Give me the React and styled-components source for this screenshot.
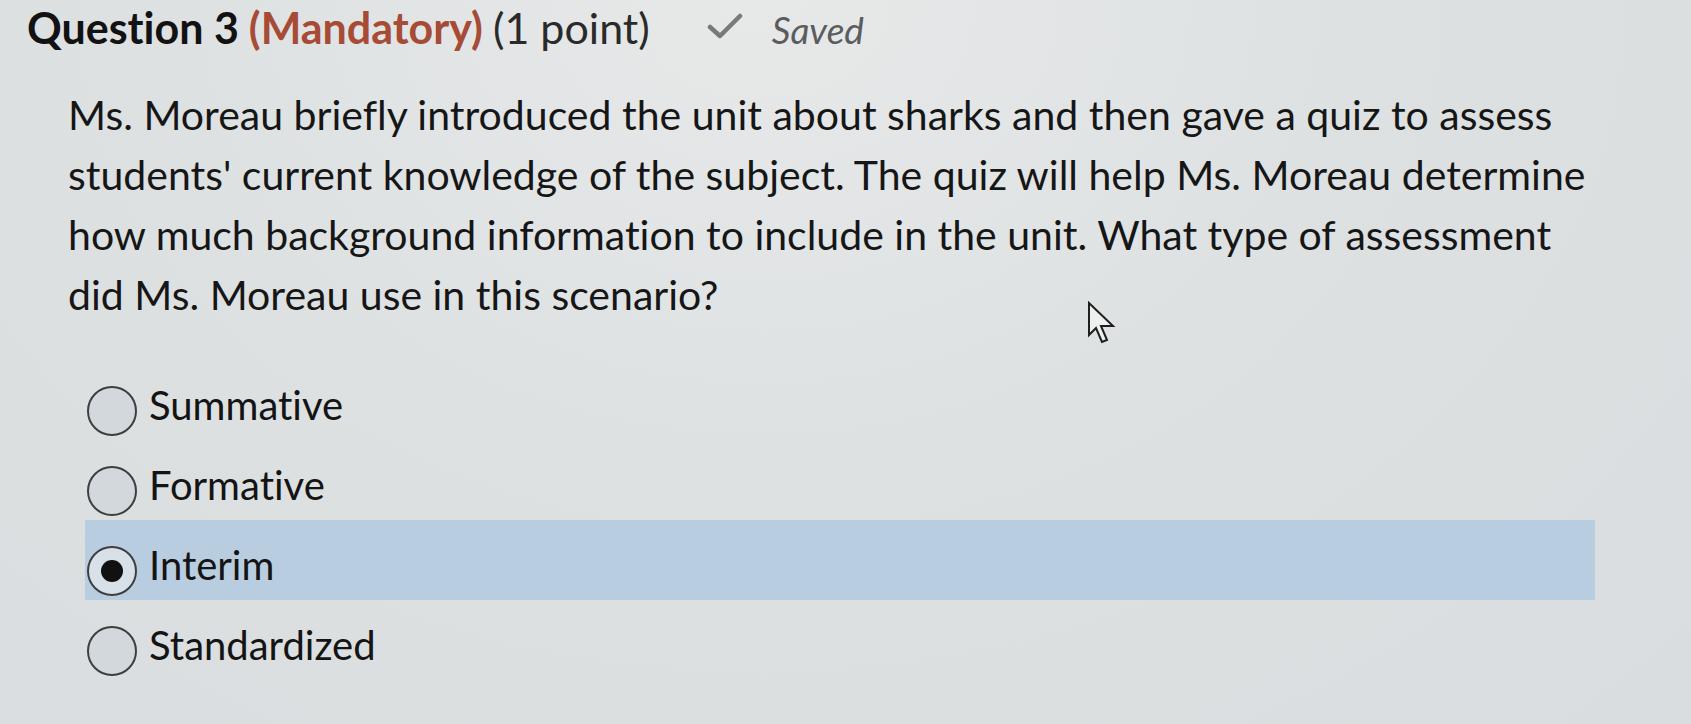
import React from "react";
import styled, { createGlobalStyle } from "styled-components";

const Global = createGlobalStyle`
  html, body { margin: 0; padding: 0; }
  body {
    width: 1691px;
    height: 724px;
    overflow: hidden;
    font-family: Lato, "Open Sans", "Liberation Sans", sans-serif;
    font-variant-ligatures: no-common-ligatures;
    background: #dde1e2;
  }
`;

const Page = styled.div`
  position: relative;
  width: 1691px;
  height: 724px;
  box-sizing: border-box;
  padding: 3px 0 0 27px;
  background: radial-gradient(ellipse at 45% 0%, #e7e9e9 0%, #dee1e2 45%, #d9dddf 100%);
  color: #161616;
`;

const Header = styled.div`
  display: flex;
  align-items: baseline;
  font-size: 43px;
  line-height: 50px;
  height: 50px;
`;

const Title = styled.span`
  font-weight: 700;
  color: #121212;
`;

const Mandatory = styled.span`
  font-weight: 700;
  color: #a64b35;
  margin-left: 10px;
`;

const Points = styled.span`
  font-weight: 400;
  color: #2a2a2a;
  margin-left: 10px;
`;

const SavedBox = styled.span`
  display: inline-flex;
  align-items: baseline;
  margin-left: 56px;
  font-size: 37px;
  font-style: italic;
  color: #5a5c5d;
  gap: 28px;
`;

const Check = styled.svg`
  width: 38px;
  height: 26px;
  align-self: center;
  position: relative;
  top: -4px;
`;

const Prompt = styled.p`
  margin: 32px 0 0 41px;
  width: 1532px;
  font-size: 41px;
  line-height: 60px;
  color: #161616;
`;

const Options = styled.div`
  display: flex;
  flex-direction: column;
  margin: 35px 0 0 58px;
  width: 1510px;
`;

const Row = styled.label`
  box-sizing: border-box;
  display: flex;
  align-items: center;
  height: 80px;
  padding: 22px 0 0 2px;
  gap: 12px;
  background: ${(p) => (p.$selected ? "#b9cde0" : "transparent")};
  font-size: 40px;
  color: #141414;
`;

const Radio = styled.span`
  box-sizing: border-box;
  width: 50px;
  height: 50px;
  border-radius: 50%;
  border: 2px solid #3c3e40;
  background: ${(p) => (p.$selected ? "#d8e0e8" : "#d3d8dd")};
  display: flex;
  align-items: center;
  justify-content: center;
  flex-shrink: 0;
`;

const Dot = styled.span`
  width: 22px;
  height: 22px;
  border-radius: 50%;
  background: #111;
`;

const OptionText = styled.span`
  line-height: 40px;
  padding-bottom: 12px;
`;

const Cursor = styled.svg`
  position: absolute;
  left: 1087px;
  top: 301px;
  width: 30px;
  height: 44px;
`;

const options = ["Summative", "Formative", "Interim", "Standardized"];

export default function App() {
  const selected = "Interim";
  return (
    <>
      <Global />
      <Page>
        <Header>
          <Title>Question 3</Title>
          <Mandatory>(Mandatory)</Mandatory>
          <Points>(1 point)</Points>
          <SavedBox>
            <Check viewBox="0 0 38 26">
              <path d="M4 14 L14 23 L34 3" fill="none" stroke="#77797a" strokeWidth="4.5" strokeLinecap="round" strokeLinejoin="round" />
            </Check>
            <span>Saved</span>
          </SavedBox>
        </Header>
        <Prompt>
          Ms. Moreau briefly introduced the unit about sharks and then gave a quiz to assess students' current knowledge of the subject. The quiz will help Ms. Moreau determine how much background information to include in the unit. What type of assessment did Ms. Moreau use in this scenario?
        </Prompt>
        <Options>
          {options.map((o) => (
            <Row key={o} $selected={o === selected}>
              <Radio $selected={o === selected}>{o === selected && <Dot />}</Radio>
              <OptionText>{o}</OptionText>
            </Row>
          ))}
        </Options>
        <Cursor viewBox="0 0 30 44">
          <path d="M2 2 L2 34 L9 27 L15 41 L20 39 L14 25 L26 25 Z" fill="#eef0f0" stroke="#1e1e1e" strokeWidth="2" strokeLinejoin="miter" />
        </Cursor>
      </Page>
    </>
  );
}
